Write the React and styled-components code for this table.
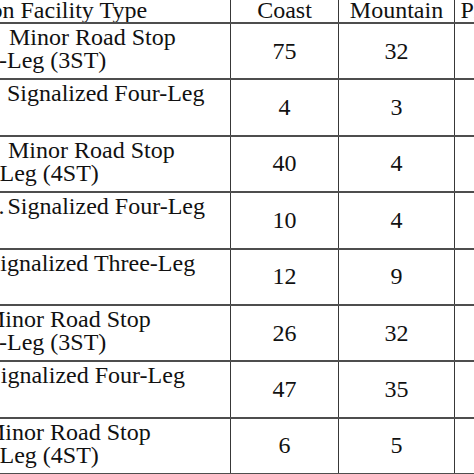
import React from "react";
import styled, { createGlobalStyle } from "styled-components";

const Global = createGlobalStyle`
  html, body { margin: 0; padding: 0; background: #ffffff; }
  body { font-family: "Liberation Serif", "Times New Roman", serif; color: #111; }
`;

const Viewport = styled.div`
  width: 474px;
  height: 474px;
  overflow: hidden;
  background: #fff;
`;

const Table = styled.div`
  display: flex;
  flex-direction: column;
  width: max-content;
`;

const Row = styled.div`
  display: grid;
  grid-template-columns: 231px 108px 116px 104px;
  height: ${(p) => (p.$header ? "24px" : "56.4px")};
  box-sizing: border-box;
  border-bottom: 2px solid #4e4e4e;
`;

const Cell = styled.div`
  box-sizing: border-box;
  border-right: 1.5px solid #383838;
  overflow: hidden;
  font-family: "Liberation Serif", "Times New Roman", serif;
  font-size: 24px;
  line-height: 23px;
  color: #111;
  white-space: nowrap;
  display: flex;
  flex-direction: column;
  ${(p) =>
    p.$kind === "type" &&
    `
    align-items: flex-start;
    justify-content: flex-start;
    padding-top: 2px;
  `}
  ${(p) =>
    p.$kind === "num" &&
    `
    align-items: center;
    justify-content: center;
  `}
  ${(p) =>
    p.$kind === "head" &&
    `
    align-items: center;
    justify-content: flex-end;
  `}
  ${(p) =>
    p.$kind === "headType" &&
    `
    align-items: flex-start;
    justify-content: flex-end;
  `}
`;

const Line = styled.span`
  display: block;
  height: 23px;
  margin-left: ${(p) => p.$lead || 0}px;
`;

const Dot = styled.span`
  margin-right: 3px;
`;

const rows = [
  { lines: [{ t: "Minor Road Stop", lead: 9 }, { t: "-Leg (3ST)", lead: -1 }], coast: 75, mountain: 32 },
  { lines: [{ t: "Signalized Four-Leg", lead: 7 }], coast: 4, mountain: 3 },
  { lines: [{ t: "Minor Road Stop", lead: 8 }, { t: "Leg (4ST)", lead: -0.5 }], coast: 40, mountain: 4 },
  { lines: [{ t: "Signalized Four-Leg", lead: -1.5, dot: true }], coast: 10, mountain: 4 },
  { lines: [{ t: "Signalized Three-Leg", lead: -13 }], coast: 12, mountain: 9 },
  { lines: [{ t: "Minor Road Stop", lead: -16 }, { t: "-Leg (3ST)", lead: -1 }], coast: 26, mountain: 32 },
  { lines: [{ t: "Signalized Four-Leg", lead: -12.6 }], coast: 47, mountain: 35 },
  { lines: [{ t: "Minor Road Stop", lead: -16 }, { t: "Leg (4ST)", lead: -0.5 }], coast: 6, mountain: 5 },
];

export default function App() {
  return (
    <>
      <Global />
      <Viewport>
        <Table>
          <Row $header>
            <Cell $kind="headType">
              <Line $lead={-9.5}>on Facility Type</Line>
            </Cell>
            <Cell $kind="head">
              <Line>Coast</Line>
            </Cell>
            <Cell $kind="head">
              <Line>Mountain</Line>
            </Cell>
            <Cell $kind="head">
              <Line>Piedmont</Line>
            </Cell>
          </Row>
          {rows.map((r, i) => (
            <Row key={i}>
              <Cell $kind="type">
                {r.lines.map((l, j) => (
                  <Line key={j} $lead={l.lead}>
                    {l.dot && <Dot>.</Dot>}
                    {l.t}
                  </Line>
                ))}
              </Cell>
              <Cell $kind="num">
                <Line>{r.coast}</Line>
              </Cell>
              <Cell $kind="num">
                <Line>{r.mountain}</Line>
              </Cell>
              <Cell $kind="num" />
            </Row>
          ))}
        </Table>
      </Viewport>
    </>
  );
}
